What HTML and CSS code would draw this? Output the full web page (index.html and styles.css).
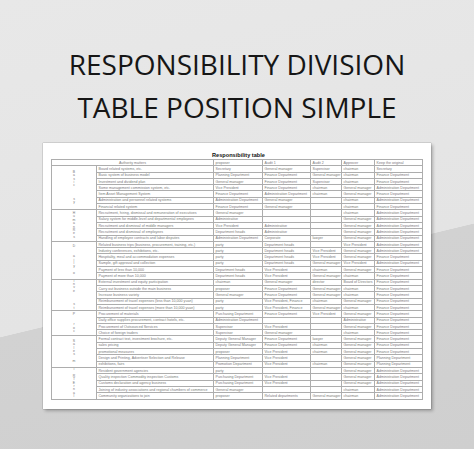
FILE: index.html
```html
<!DOCTYPE html>
<html>
<head>
<meta charset="utf-8">
<link rel="stylesheet" href="styles.css">
</head>
<body>
<div class="page">
  <h1 class="title">RESPONSIBILITY DIVISION<br>TABLE POSITION SIMPLE</h1>
  <div class="sheet">
    <div class="sheet-title">Responsibility table</div>
    <table class="grid">
      <colgroup>
        <col class="c-cat"><col class="c-matter"><col class="c-prop"><col class="c-a1"><col class="c-a2"><col class="c-appr"><col class="c-keep">
      </colgroup>
      <tr class="head"><td colspan="2" class="center">Authority matters</td><td>proposer</td><td>Audit 1</td><td>Audit 2</td><td>Approver</td><td>Keep the original</td></tr>
      <tr><td rowspan="7" class="cat"><div class="vert"><span>B</span><span>a</span><span>s</span><span>i</span><span>c</span><span>&nbsp;</span><span>&nbsp;</span><span>&nbsp;</span><span>s</span><span>y</span></div></td><td>Board related systems, etc.</td><td>Secretary</td><td>General manager</td><td>Supervisor</td><td>chairman</td><td>Secretary</td></tr>
      <tr><td>Basic system of business model</td><td>Planning Department</td><td>Finance Department</td><td>General manager</td><td>chairman</td><td>Finance Department</td></tr>
      <tr><td>Investment and dividend plan</td><td>General manager</td><td>Finance Department</td><td>Supervisor</td><td>chairman</td><td>Finance Department</td></tr>
      <tr><td>Some management commission system, etc.</td><td>Vice President</td><td>Finance Department</td><td>chairman</td><td>General manager</td><td>Administration Department</td></tr>
      <tr><td>Item Asset Management System</td><td>Finance Department</td><td>Administration Department</td><td>chairman</td><td>General manager</td><td>Finance Department</td></tr>
      <tr><td>Administration and personnel related systems</td><td>Administration Department</td><td>General manager</td><td></td><td>chairman</td><td>Administration Department</td></tr>
      <tr><td>Financial related system</td><td>Finance Department</td><td>General manager</td><td></td><td>chairman</td><td>Finance Department</td></tr>
      <tr><td rowspan="5" class="cat"><div class="vert"><span>H</span><span>u</span><span>m</span><span>a</span><span>n</span><span>R</span><span>e</span><span>s</span></div></td><td>Recruitment, hiring, dismissal and remuneration of executives</td><td>General manager</td><td></td><td></td><td>chairman</td><td>Administration Department</td></tr>
      <tr><td>Salary system for middle-level and departmental employees</td><td>Administrative</td><td></td><td></td><td>General manager</td><td>Administration Department</td></tr>
      <tr><td>Recruitment and dismissal of middle managers</td><td>Vice President</td><td>Administrative</td><td></td><td>General manager</td><td>Administration Department</td></tr>
      <tr><td>Recruitment and dismissal of employees</td><td>Department heads</td><td>Administrative</td><td></td><td>General manager</td><td>Administration Department</td></tr>
      <tr><td>Handling of employee contracts and labor disputes</td><td>Administration Department</td><td>Corporate</td><td>lawyer</td><td>General manager</td><td>Administration Department</td></tr>
      <tr><td rowspan="6" class="cat"><div class="vert"><span>D</span><span>&nbsp;</span><span>&nbsp;</span><span>a</span><span>i</span><span>l</span><span>y</span><span>&nbsp;</span><span>o</span></div></td><td>Related business trips (business, procurement, training, etc.)</td><td>party</td><td>Department heads</td><td></td><td>Vice President</td><td>Administration Department</td></tr>
      <tr><td>Industry conferences, exhibitions, etc.</td><td>party</td><td>Department heads</td><td>Vice President</td><td>General manager</td><td>Administration Department</td></tr>
      <tr><td>Hospitality, meal and accommodation expenses</td><td>party</td><td>Department heads</td><td>Vice President</td><td>General manager</td><td>Finance Department</td></tr>
      <tr><td>Sample, gift approval and collection</td><td>party</td><td>Department heads</td><td>General manager</td><td>Vice President</td><td>Administration Department</td></tr>
      <tr><td>Payment of less than 10,000</td><td>Department heads</td><td>Vice President</td><td>chairman</td><td>General manager</td><td>Finance Department</td></tr>
      <tr><td>Payment of more than 10,000</td><td>Department heads</td><td>Vice President</td><td>General manager</td><td>chairman</td><td>Finance Department</td></tr>
      <tr><td rowspan="5" class="cat"><div class="vert"><span>I</span><span>n</span><span>v</span><span>e</span><span>&nbsp;</span><span>&nbsp;</span><span>&nbsp;</span><span>s</span><span>t</span></div></td><td>External investment and equity participation</td><td>chairman</td><td>General manager</td><td>director</td><td>Board of Directors</td><td>Finance Department</td></tr>
      <tr><td>Carry out business outside the main business</td><td>proposer</td><td>Finance Department</td><td>General manager</td><td>chairman</td><td>Finance Department</td></tr>
      <tr><td>Increase business variety</td><td>General manager</td><td>Finance Department</td><td>General manager</td><td>chairman</td><td>Finance Department</td></tr>
      <tr><td>Reimbursement of travel expenses (less than 10,000 yuan)</td><td>party</td><td>Vice President, Finance</td><td>chairman</td><td>General manager</td><td>Finance Department</td></tr>
      <tr><td>Reimbursement of travel expenses (more than 10,000 yuan)</td><td>party</td><td>Vice President, Finance</td><td>General manager</td><td>chairman</td><td>Finance Department</td></tr>
      <tr><td rowspan="4" class="cat"><div class="vert"><span>P</span><span>&nbsp;</span><span>&nbsp;</span><span>r</span><span>o</span><span>c</span></div></td><td>Procurement of materials</td><td>Purchasing Department</td><td>Finance Department</td><td>Vice President</td><td>General manager</td><td>Finance Department</td></tr>
      <tr><td>Daily office supplies procurement, contract hotels, etc.</td><td>Administration Department</td><td></td><td></td><td>Administrative</td><td>Finance Department</td></tr>
      <tr><td>Procurement of Outsourced Services</td><td>Supervisor</td><td>Vice President</td><td></td><td>General manager</td><td>Finance Department</td></tr>
      <tr><td>Choice of foreign traders</td><td>Supervisor</td><td>General manager</td><td></td><td>chairman</td><td>Finance Department</td></tr>
      <tr><td rowspan="5" class="cat"><div class="vert"><span>S</span><span>a</span><span>l</span><span>e</span><span>s</span><span>&nbsp;</span><span>m</span></div></td><td>Formal contract text, investment brochure, etc.</td><td>Deputy General Manager</td><td>Finance Department</td><td>lawyer</td><td>General manager</td><td>Finance Department</td></tr>
      <tr><td>sales pricing</td><td>Deputy General Manager</td><td>Finance Department</td><td>chairman</td><td>General manager</td><td>Finance Department</td></tr>
      <tr><td>promotional measures</td><td>proposer</td><td>Vice President</td><td>chairman</td><td>General manager</td><td>Finance Department</td></tr>
      <tr><td>Design and Printing, Advertiser Selection and Release</td><td>Planning Department</td><td>Vice President</td><td></td><td>General manager</td><td>Planning Department</td></tr>
      <tr><td>exhibitions, fairs</td><td>Promotion Department</td><td>Vice President</td><td>chairman</td><td>General manager</td><td>Planning Department</td></tr>
      <tr><td rowspan="5" class="cat"><div class="vert"><span>I</span><span>&nbsp;</span><span>R</span><span>T</span><span>E</span><span>r</span><span>n</span><span>a</span><span>l</span></div></td><td>Resident government agencies</td><td>party</td><td></td><td></td><td>General manager</td><td>Administration Department</td></tr>
      <tr><td>Quality inspection Commodity inspection Customs</td><td>Purchasing Department</td><td>Vice President</td><td></td><td>General manager</td><td>Administration Department</td></tr>
      <tr><td>Customs declaration and agency business</td><td>Purchasing Department</td><td>Vice President</td><td></td><td>General manager</td><td>Administration Department</td></tr>
      <tr><td>Joining of industry associations and regional chambers of commerce</td><td>General manager</td><td></td><td></td><td>chairman</td><td>Administration Department</td></tr>
      <tr><td>Community organizations to join</td><td>proposer</td><td>Related departments</td><td>General manager</td><td>chairman</td><td>Administration Department</td></tr>
    </table>
  </div>
</div>
</body>
</html>
```

FILE: styles.css
```css
* { box-sizing: border-box; }
html, body { margin: 0; padding: 0; }
body {
  width: 474px;
  height: 449px;
  overflow: hidden;
  background: linear-gradient(166.5deg, #e8e8e8 0%, #e4e4e4 59.9%, #d2d2d2 60%, #cfcfcf 100%);
  font-family: "Open Sans", "Liberation Sans", sans-serif;
}
.page {
  display: flex;
  flex-direction: column;
  align-items: flex-start;
  padding-top: 43px;
}
.title {
  align-self: stretch;
  margin: 0;
  text-align: center;
  font-family: "Open Sans", sans-serif;
  font-weight: 400;
  font-size: 28px;
  line-height: 43px;
  color: #161616;
}
.sheet {
  margin: 14px 0 0 43px;
  width: 388px;
  height: 266px;
  background: #fff;
  padding: 8px 9px 0 8px;
  box-shadow: 0 0 1px rgba(0,0,0,0.55), 2px 2px 3px rgba(0,0,0,0.25);
}
.sheet-title {
  text-align: center;
  font-family: "Liberation Sans", sans-serif;
  font-weight: 700;
  font-size: 5.6px;
  line-height: 8px;
  color: #111;
  padding-left: 4px;
}
.grid {
  width: 371px;
  table-layout: fixed;
  border-collapse: collapse;
  font-family: "Liberation Sans", sans-serif;
  font-size: 3.6px;
  color: #7a7a7a;
}
.c-cat { width: 45px; }
.c-matter { width: 117px; }
.c-prop { width: 49px; }
.c-a1 { width: 48px; }
.c-a2 { width: 31px; }
.c-appr { width: 33px; }
.c-keep { width: 48px; }
.grid tr { height: 6.3px; }
.grid td {
  border: 1px solid #adadad;
  padding: 0 0 0 1.5px;
  height: 6.3px;
  line-height: 4px;
  white-space: nowrap;
  overflow: hidden;
  vertical-align: middle;
}
.grid td.center { text-align: center; padding: 0; }
.grid td.cat { padding: 0; vertical-align: middle; }
.vert {
  display: flex;
  flex-direction: column;
  align-items: center;
  font-size: 3.4px;
  line-height: 3.4px;
  color: #777;
}
```
